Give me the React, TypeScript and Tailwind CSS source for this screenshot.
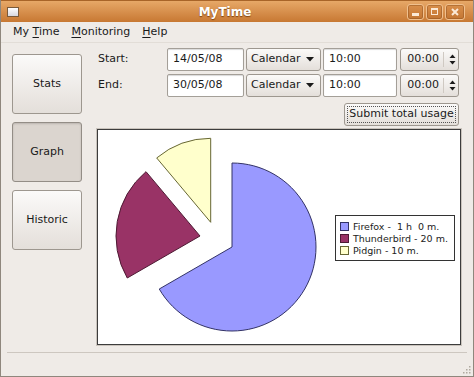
import React from 'react';

const font = { fontFamily: '"DejaVu Sans", Verdana, sans-serif' };

const btn =
  'border border-[#9d978f] rounded-[3px] bg-gradient-to-b from-[#fbfaf9] to-[#e4dfda] text-[#1a1a1a]';
const entry =
  'border border-[#a49f98] rounded-[2px] bg-white shadow-[inset_0_1px_1px_rgba(0,0,0,0.15)] flex items-center pl-[5px] text-[#1a1a1a]';

const TitleButton: React.FC<{ children: React.ReactNode; wide?: boolean }> = ({ children, wide }) => (
  <div
    className={`${wide ? 'w-[20px]' : 'w-[17px]'} h-[16px] rounded-[3px] border border-[#f0c08e] bg-gradient-to-b from-[#d98f4b] to-[#c37633] shadow-[inset_0_0_0_1px_rgba(140,80,30,0.45)] flex items-center justify-center`}
  >
    {children}
  </div>
);

const DateRow: React.FC<{ label: string; date: string }> = ({ label, date }) => (
  <div className="flex h-[23px] items-center">
    <div className="w-[70px] pl-[1px]">{label}</div>
    <div className={`${entry} w-[77px] h-full`}>{date}</div>
    <div className={`${btn} ml-[2px] w-[75px] h-full flex items-center pl-[4px]`}>
      <span>Calendar</span>
      <svg width="8" height="5" viewBox="0 0 8 5" className="ml-[6px]">
        <path d="M0 0 L8 0 L4 4.5 Z" fill="#1a1a1a" />
      </svg>
    </div>
    <div className={`${entry} ml-[2px] w-[74px] h-full`}>10:00</div>
    <div className={`${btn} ml-[3px] w-[59px] h-full flex items-center`}>
      <span className="ml-[3px] w-[35px] text-right">00:00</span>
      <div className="ml-[4px] w-px h-[15px] bg-[#cfc9c2]" />
      <svg width="7" height="11" viewBox="0 0 7 11" className="ml-[5px]">
        <path d="M0.5 4 L3.5 0.5 L6.5 4 Z" fill="#1a1a1a" />
        <path d="M0.5 7 L3.5 10.5 L6.5 7 Z" fill="#1a1a1a" />
      </svg>
    </div>
  </div>
);

const legend = [
  { text: 'Firefox -  1 h  0 m.', fill: '#9999ff', stroke: '#333366' },
  { text: 'Thunderbird - 20 m.', fill: '#993366', stroke: '#4d1a33' },
  { text: 'Pidgin - 10 m.', fill: '#ffffcc', stroke: '#666633' },
];

export default function App() {
  return (
    <div
      className="w-[474px] h-[377px] overflow-hidden bg-[#efebe7] flex flex-col text-[11px] border-x border-b border-[#8f877d]"
      style={font}
    >
      {/* Title bar */}
      <div className="h-[22px] shrink-0 bg-gradient-to-b from-[#e7a867] to-[#c77832] border-t border-[#a86428] flex items-center relative">
        <div className="ml-[6px] w-[12px] h-[10px] bg-gradient-to-b from-[#ffffff] to-[#d8d8e0] border border-[#7a5a3a]" />
        <div className="flex-1 text-center font-bold text-[12px] text-white [text-shadow:0_1px_1px_rgba(90,40,0,0.7)] pl-[24px]">
          MyTime
        </div>
        <div className="flex gap-[2px] mr-[8px]">
          <TitleButton>
            <div className="w-[7px] h-[3px] bg-[#fbe9d6] mt-[6px]" />
          </TitleButton>
          <TitleButton>
            <div className="w-[7px] h-[7px] border border-[#fbe9d6] border-t-2" />
          </TitleButton>
          <TitleButton wide>
            <svg width="8" height="8" viewBox="0 0 8 8">
              <path d="M1 1 L7 7 M7 1 L1 7" stroke="#fbe9d6" strokeWidth="2" />
            </svg>
          </TitleButton>
        </div>
      </div>

      {/* Menu bar */}
      <div className="h-[21px] shrink-0 flex items-center gap-[12px] pl-[12px] text-[#1a1a1a] border-b border-[#e2ddd7]">
        <span>
          My <span className="underline underline-offset-2">T</span>ime
        </span>
        <span>
          <span className="underline underline-offset-2">M</span>onitoring
        </span>
        <span>
          <span className="underline underline-offset-2">H</span>elp
        </span>
      </div>

      {/* Content */}
      <div className="flex-1 flex pt-[5px] pb-[6px] pl-[11px] text-[#1a1a1a]">
        <div className="w-[70px] mt-[6px] flex flex-col gap-[8px]">
          <div className={`${btn} h-[60px] flex items-center justify-center`}>Stats</div>
          <div className="h-[60px] flex items-center justify-center border border-[#938d86] rounded-[3px] bg-[#dbd5cf] shadow-[inset_0_1px_2px_rgba(0,0,0,0.15)]">
            Graph
          </div>
          <div className={`${btn} h-[60px] flex items-center justify-center`}>Historic</div>
        </div>

        <div className="ml-[15px] w-[364px] flex flex-col">
          <div className="flex flex-col gap-[3px]">
            <DateRow label="Start:" date="14/05/08" />
            <DateRow label="End:" date="30/05/08" />
          </div>
          <div className="mt-[6px] flex justify-end pr-[2px]">
            <div className={`${btn} w-[115px] h-[23px] p-[2px]`}>
              <div className="w-full h-full border border-dotted border-[#555] flex items-center justify-center">
                Submit total usage
              </div>
            </div>
          </div>

          {/* Chart */}
          <div className="mt-[3px] h-[216px] border border-[#3c3c3c] bg-white flex items-start shadow-[0_0_0_1px_#c9c3bc]">
            <svg width="237" height="214" viewBox="0 0 237 214" className="shrink-0">
              <path
                d="M134,117 L134,33 A84,84 0 1 1 61.25,159 Z"
                fill="#9999ff"
                stroke="#333366"
                strokeWidth="1"
              />
              <path
                d="M102,106 L29.25,148 A84,84 0 0 1 48,41.65 Z"
                fill="#993366"
                stroke="#4d1a33"
                strokeWidth="1"
              />
              <path
                d="M112.7,92.3 L58.7,27.95 A84,84 0 0 1 112.7,8.3 Z"
                fill="#ffffcc"
                stroke="#666633"
                strokeWidth="1"
              />
            </svg>
            <div className="mt-[85px] w-[120px] h-[46px] border border-[#333] flex flex-col justify-center pl-[4px] gap-[1px] text-[9.5px] leading-[11px] text-[#222]">
              {legend.map(l => (
                <div key={l.text} className="flex items-center">
                  <div
                    className="w-[9px] h-[9px] border mr-[4px]"
                    style={{ backgroundColor: l.fill, borderColor: l.stroke }}
                  />
                  <span className="whitespace-pre">{l.text}</span>
                </div>
              ))}
            </div>
          </div>
        </div>
      </div>

      {/* Status bar */}
      <div className="h-[24px] shrink-0 mx-[6px] border-t border-[#cdc7c0] flex justify-end items-end">
        <svg width="10" height="10" viewBox="0 0 10 10" className="mb-[2px] -mr-[4px]">
          {[
            [8, 2], [8, 5], [5, 5], [8, 8], [5, 8], [2, 8],
          ].map(([x, y]) => (
            <rect key={`${x}-${y}`} x={x} y={y} width="1.5" height="1.5" fill="#b0a99f" />
          ))}
        </svg>
      </div>
    </div>
  );
}
